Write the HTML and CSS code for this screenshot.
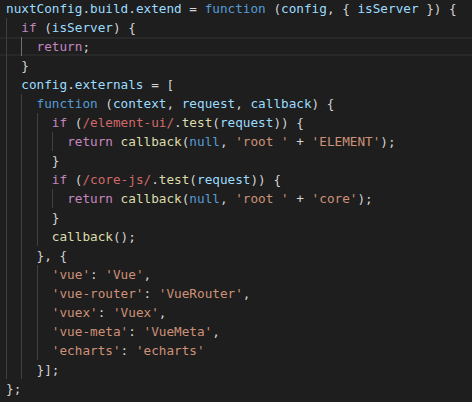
FILE: index.html
```html
<!DOCTYPE html>
<html>
<head>
<meta charset="utf-8">
<link rel="stylesheet" href="styles.css">
</head>
<body>
<div class="editor">
<div class="ln"><span class="v">nuxtConfig</span><span class="p">.</span><span class="v">build</span><span class="p">.</span><span class="v">extend</span><span class="p"> = </span><span class="k">function</span><span class="p"> (</span><span class="v">config</span><span class="p">, { </span><span class="v">isServer</span><span class="p"> }) {</span></div>
<div class="ln"><span class="g">  </span><span class="c">if</span><span class="p"> (</span><span class="v">isServer</span><span class="p">) {</span></div>
<div class="ln cur"><span class="g">  </span><span class="g act">  </span><span class="c">return</span><span class="p">;</span></div>
<div class="ln"><span class="g">  </span><span class="p">}</span></div>
<div class="ln"><span class="g">  </span><span class="v">config</span><span class="p">.</span><span class="v">externals</span><span class="p"> = [</span></div>
<div class="ln"><span class="g">  </span><span class="g">  </span><span class="k">function</span><span class="p"> (</span><span class="v">context</span><span class="p">, </span><span class="v">request</span><span class="p">, </span><span class="v">callback</span><span class="p">) {</span></div>
<div class="ln"><span class="g">  </span><span class="g">  </span><span class="g">  </span><span class="c">if</span><span class="p"> (</span><span class="r">/element-ui/</span><span class="p">.</span><span class="f">test</span><span class="p">(</span><span class="v">request</span><span class="p">)) {</span></div>
<div class="ln"><span class="g">  </span><span class="g">  </span><span class="g">  </span><span class="g">  </span><span class="c">return</span><span class="p"> </span><span class="f">callback</span><span class="p">(</span><span class="k">null</span><span class="p">, </span><span class="s">'root '</span><span class="p"> + </span><span class="s">'ELEMENT'</span><span class="p">);</span></div>
<div class="ln"><span class="g">  </span><span class="g">  </span><span class="g">  </span><span class="p">}</span></div>
<div class="ln"><span class="g">  </span><span class="g">  </span><span class="g">  </span><span class="c">if</span><span class="p"> (</span><span class="r">/core-js/</span><span class="p">.</span><span class="f">test</span><span class="p">(</span><span class="v">request</span><span class="p">)) {</span></div>
<div class="ln"><span class="g">  </span><span class="g">  </span><span class="g">  </span><span class="g">  </span><span class="c">return</span><span class="p"> </span><span class="f">callback</span><span class="p">(</span><span class="k">null</span><span class="p">, </span><span class="s">'root '</span><span class="p"> + </span><span class="s">'core'</span><span class="p">);</span></div>
<div class="ln"><span class="g">  </span><span class="g">  </span><span class="g">  </span><span class="p">}</span></div>
<div class="ln"><span class="g">  </span><span class="g">  </span><span class="g">  </span><span class="f">callback</span><span class="p">();</span></div>
<div class="ln"><span class="g">  </span><span class="g">  </span><span class="p">}, {</span></div>
<div class="ln"><span class="g">  </span><span class="g">  </span><span class="g">  </span><span class="s">'vue'</span><span class="p">: </span><span class="s">'Vue'</span><span class="p">,</span></div>
<div class="ln"><span class="g">  </span><span class="g">  </span><span class="g">  </span><span class="s">'vue-router'</span><span class="p">: </span><span class="s">'VueRouter'</span><span class="p">,</span></div>
<div class="ln"><span class="g">  </span><span class="g">  </span><span class="g">  </span><span class="s">'vuex'</span><span class="p">: </span><span class="s">'Vuex'</span><span class="p">,</span></div>
<div class="ln"><span class="g">  </span><span class="g">  </span><span class="g">  </span><span class="s">'vue-meta'</span><span class="p">: </span><span class="s">'VueMeta'</span><span class="p">,</span></div>
<div class="ln"><span class="g">  </span><span class="g">  </span><span class="g">  </span><span class="s">'echarts'</span><span class="p">: </span><span class="s">'echarts'</span></div>
<div class="ln"><span class="g">  </span><span class="g">  </span><span class="p">}];</span></div>
<div class="ln"><span class="p">};</span></div>
</div>
</body>
</html>
```
FILE: styles.css
```css
html, body {
  margin: 0;
  padding: 0;
  background: #1e1e1e;
  width: 472px;
  height: 402px;
  overflow: hidden;
}
.editor {
  margin-top: -1px;
  padding-left: 6px;
  font-family: "DejaVu Sans Mono", "Liberation Mono", monospace;
  font-size: 12.7px;
  line-height: 19px;
  color: #d4d4d4;
}
.ln {
  height: 19px;
  white-space: pre;
  margin-left: -6px;
  padding-left: 6px;
}
.cur {
  box-shadow: inset 0 2px 0 #282828, inset 0 -2px 0 #282828;
}
.g {
  display: inline-block;
  height: 19px;
  vertical-align: top;
  box-shadow: inset 1px 0 0 #404040;
}
.g.act {
  box-shadow: inset 1px 0 0 #707070;
}
.p { color: #d4d4d4; }
.v { color: #9cdcfe; }
.k { color: #569cd6; }
.c { color: #c586c0; }
.f { color: #dcdcaa; }
.s { color: #ce9178; }
.r { color: #d16969; }
```
